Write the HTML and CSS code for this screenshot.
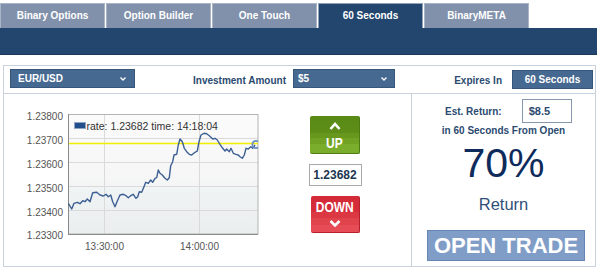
FILE: index.html
```html
<!DOCTYPE html>
<html lang="en">
<head>
    <meta charset="UTF-8">
    <meta name="viewport" content="width=device-width, initial-scale=1.0">
    <title>60 Seconds Trading</title>
    <link rel="stylesheet" href="styles.css">
</head>
<body>
    <nav class="tabs">
        <div class="tab">Binary Options</div>
        <div class="tab">Option Builder</div>
        <div class="tab">One Touch</div>
        <div class="tab active">60 Seconds</div>
        <div class="tab">BinaryMETA</div>
    </nav>
    <div class="bar"></div>

    <section class="panel">
        <div class="controls">
            <div class="select asset">
                <span>EUR/USD</span>
                <svg class="caret" width="6" height="4" viewBox="0 0 6 4"><polyline points="0.5,0.5 3,3 5.5,0.5" fill="none" stroke="#fff" stroke-width="1.3"/></svg>
            </div>
            <div class="label invest-label">Investment Amount</div>
            <div class="select amount">
                <span>$5</span>
                <svg class="caret" width="6" height="4" viewBox="0 0 6 4"><polyline points="0.5,0.5 3,3 5.5,0.5" fill="none" stroke="#fff" stroke-width="1.3"/></svg>
            </div>
            <div class="label expires-label">Expires In</div>
            <div class="expiry">60 Seconds</div>
        </div>

        <div class="trade">
            <div class="chart-side">
                <svg class="chart" width="300" height="172" viewBox="4 94 300 172">
                    <defs>
                        <linearGradient id="plotBg" x1="0" y1="0" x2="0" y2="1">
                            <stop offset="0" stop-color="#fbfbfb"/>
                            <stop offset="0.55" stop-color="#f6f6f6"/>
                            <stop offset="0.65" stop-color="#eff3f4"/>
                            <stop offset="1" stop-color="#ebeeee"/>
                        </linearGradient>
                        <clipPath id="plotClip"><rect x="68" y="114" width="190" height="120"/></clipPath>
                    </defs>
                    <rect x="68" y="114" width="190" height="120" fill="url(#plotBg)"/>
                    <g stroke="#dadada" stroke-width="1">
                        <line x1="68" y1="138.5" x2="258" y2="138.5"/>
                        <line x1="68" y1="162.5" x2="258" y2="162.5"/>
                        <line x1="68" y1="186.5" x2="258" y2="186.5"/>
                        <line x1="68" y1="210.5" x2="258" y2="210.5"/>
                        <line x1="104.5" y1="114" x2="104.5" y2="234"/>
                        <line x1="199.5" y1="114" x2="199.5" y2="234"/>
                    </g>
                    <rect x="68.5" y="114.5" width="189.5" height="119.5" fill="none" stroke="#b4b4b4"/>
                    <line x1="68.5" y1="114" x2="68.5" y2="235" stroke="#8a8a8a"/>
                    <line x1="68" y1="234.5" x2="258" y2="234.5" stroke="#8a8a8a"/>
                    <line x1="69" y1="143.5" x2="258" y2="143.5" stroke="#f0f000" stroke-width="1.5"/>

                    <rect x="74.5" y="122.5" width="11" height="6" fill="#234e8c" stroke="#90a4c4"/>
                    <text x="86.5" y="130" class="legend">rate: 1.23682 time: 14:18:04</text>

                    <g clip-path="url(#plotClip)">
                        <polyline fill="none" stroke="#3d5f93" stroke-width="1.4" stroke-linejoin="round"
                            points="68.3,203.3 71.7,209 74,203.3 77.3,202.3 80,203.7 82.7,200.7 85,201.7 87.3,199 90,201.7 92.7,192.7 96.7,192.3 100,195 103.3,196 106,194.3 108.3,196.7 110.7,195 112.7,201.7 115,206.7 117.3,201 120,195 123.3,194.3 126,195.7 128.3,197.7 130.7,195.7 133.3,194.3 136,198.3 137.7,196.7 139.3,191.7 141.7,192.3 144,186.7 145.7,182.3 148.3,183.3 150.7,180 152.7,182.3 155,178.3 156.7,177.7 158.3,170 160,173.3 162.3,175 165,178.3 167.3,180 169.3,177.7 170.7,165.7 172.7,161.7 174,155 176.7,154.3 178.3,145 180,139 182.3,141.7 184.3,148.3 186.7,151.7 189.3,154.3 191.7,155 195,152.3 197.3,151 199,141.7 201,135 204,133.3 206.7,133.7 209.3,135.7 212.7,139 215,138.3 217.3,140 220,144.3 222.7,148.3 225,151 226.7,149 229.3,151.7 231,148.3 233.3,153.3 236,154.3 238.3,155 240,156.7 242.3,158.3 244.3,155 246,148.3 248.3,149 250.7,146.7 252.7,148.3 255,145"/>
                        <circle cx="256" cy="144.5" r="3.6" fill="none" stroke="#6a8bbf" stroke-width="1.8"/>
                    </g>

                    <g class="axis" text-anchor="end">
                        <text x="63" y="119.5">1.23800</text>
                        <text x="63" y="143.5">1.23700</text>
                        <text x="63" y="167.5">1.23600</text>
                        <text x="63" y="191.5">1.23500</text>
                        <text x="63" y="215.5">1.23400</text>
                        <text x="63" y="239">1.23300</text>
                    </g>
                    <g class="axis" text-anchor="middle">
                        <text x="104.5" y="249.5">13:30:00</text>
                        <text x="199.5" y="249.5">14:00:00</text>
                    </g>
                </svg>

                <div class="buttons">
                    <div class="btn-up">
                        <svg width="12" height="8" viewBox="0 0 12 8"><polyline points="1.5,7 6,2 10.5,7" fill="none" stroke="#fff" stroke-width="2.6"/></svg>
                        <span class="btn-text">UP</span>
                    </div>
                    <div class="rate">1.23682</div>
                    <div class="btn-down">
                        <span class="btn-text">DOWN</span>
                        <svg width="12" height="7" viewBox="0 0 12 7"><polyline points="1.5,1 6,5.5 10.5,1" fill="none" stroke="#fff" stroke-width="2.6"/></svg>
                    </div>
                </div>
            </div>

            <div class="summary">
                <div class="est-row">
                    <span class="est-label">Est. Return:</span>
                    <div class="est-box">$8.5</div>
                </div>
                <div class="est-note">in 60 Seconds From Open</div>
                <div class="percent">70%</div>
                <div class="return">Return</div>
                <button class="open-trade">OPEN TRADE</button>
            </div>
        </div>
    </section>
</body>
</html>
```

FILE: styles.css
```css
/* Base */
* {
    margin: 0;
    padding: 0;
    box-sizing: border-box;
}

body {
    width: 600px;
    height: 273px;
    overflow: hidden;
    background: #fff;
    font-family: 'Liberation Sans', Arial, sans-serif;
}

/* Tabs */
.tabs {
    display: flex;
    gap: 1px;
    margin-top: 3px;
    height: 25px;
}

.tab {
    width: 105px;
    height: 25px;
    background: #8191ab;
    border: 1px solid #a9b5c7;
    border-bottom: none;
    color: #fff;
    font-size: 10px;
    font-weight: bold;
    line-height: 24px;
    text-align: center;
}

.tab.active {
    background: #23466e;
    border-color: #8fa0b8;
}

.bar {
    width: 597px;
    height: 27px;
    background: #23466e;
    border-bottom: 1px solid #1a3759;
}

/* Panel */
.panel {
    width: 593px;
    margin: 10px 0 0 3px;
    border: 1px solid #c9d1dc;
}

.controls {
    display: flex;
    align-items: flex-start;
    height: 28px;
    padding: 3px 2px 0 6px;
    border-bottom: 1px solid #c9d1dc;
}

.select {
    display: flex;
    align-items: center;
    justify-content: space-between;
    height: 19px;
    background: #466991;
    border: 1px solid #36567b;
    color: #fff;
    font-size: 10px;
    font-weight: bold;
}

.select.asset {
    width: 125px;
    padding: 0 8px 0 7px;
}

.select.amount {
    width: 102px;
    margin-left: 7px;
    padding: 0 7px 0 4px;
}

.caret {
    display: block;
}

.label {
    color: #2b4b70;
    font-size: 10px;
    font-weight: bold;
    line-height: 19px;
    padding-top: 2px;
}

.invest-label {
    margin-left: 58px;
}

.expires-label {
    margin-left: auto;
    margin-right: 10px;
}

.expiry {
    width: 81px;
    height: 19px;
    margin-top: 1px;
    background: #466991;
    border: 1px solid #36567b;
    color: #fff;
    font-size: 10px;
    font-weight: bold;
    line-height: 17px;
    text-align: center;
}

/* Trade area */
.trade {
    display: flex;
    height: 172px;
}

.chart-side {
    display: flex;
    width: 407px;
}

.chart {
    display: block;
    flex: none;
}

.chart .axis {
    font-family: 'Liberation Sans', Arial, sans-serif;
    font-size: 10px;
    fill: #555;
}

.chart .legend {
    font-family: 'Liberation Sans', Arial, sans-serif;
    font-size: 10.5px;
    fill: #333;
}

.buttons {
    display: flex;
    flex-direction: column;
    align-items: center;
    width: 62px;
    padding-top: 22px;
}

.btn-up,
.btn-down {
    display: flex;
    flex-direction: column;
    align-items: center;
    border-radius: 2px;
    color: #fff;
}

.btn-up {
    width: 50px;
    height: 38px;
    padding-top: 6px;
    background: linear-gradient(#5a8a16 0, #5d8e18 45%, #67981d 45%, #67981d 60%, #71a224 60%, #71a224 76%, #7bad2c 76%, #7bad2c 100%);
    border-right: 1px solid #4e7c12;
    border-bottom: 1px solid #4e7c12;
}

.btn-up svg {
    display: block;
    margin-bottom: 5px;
}

.btn-down {
    width: 49px;
    height: 37px;
    margin-top: 10px;
    padding-top: 3px;
    background: linear-gradient(#d42a37 0, #d62d3a 45%, #dc3843 45%, #dc3843 62%, #e1434d 62%, #e1434d 80%, #e54c56 80%, #e54c56 100%);
    border-right: 1px solid #b81f2c;
    border-bottom: 1px solid #b81f2c;
}

.btn-down svg {
    display: block;
    margin-top: 6px;
}

.btn-text {
    display: inline-block;
    font-size: 15px;
    font-weight: bold;
    line-height: 15px;
    transform: scaleX(0.8);
}

.rate {
    width: 53px;
    height: 22px;
    margin-top: 10px;
    border: 1px solid #a8a8a8;
    color: #1b3650;
    font-size: 12px;
    font-weight: bold;
    line-height: 20px;
    text-align: center;
}

/* Summary */
.summary {
    flex: 1;
    border-left: 1px solid #c9d1dc;
    text-align: center;
}

.est-row {
    display: flex;
    align-items: center;
    margin-top: 5px;
    padding-left: 33px;
}

.est-label {
    margin-right: 20px;
    color: #2b4b70;
    font-size: 10px;
    font-weight: bold;
}

.est-box {
    width: 50px;
    height: 24px;
    border: 1px solid #8797ad;
    color: #2b4b70;
    font-size: 11px;
    font-weight: bold;
    line-height: 22px;
    text-align: left;
    padding-left: 6px;
}

.est-note {
    margin-top: 2px;
    color: #2b4b70;
    font-size: 10px;
    font-weight: bold;
    line-height: 12px;
}

.percent {
    margin-top: 6px;
    color: #0f2b5b;
    font-size: 41px;
    line-height: 41px;
}

.return {
    margin-top: 10px;
    color: #30507a;
    font-size: 16.5px;
    line-height: 20px;
}

.open-trade {
    display: block;
    width: 158px;
    height: 31px;
    margin: 16px 0 0 15px;
    background: #7f9dc7;
    border: 1px solid #6586b6;
    color: #fff;
    font-family: 'Liberation Sans', Arial, sans-serif;
    font-size: 22px;
    font-weight: bold;
    line-height: 29px;
    white-space: nowrap;
}
```
